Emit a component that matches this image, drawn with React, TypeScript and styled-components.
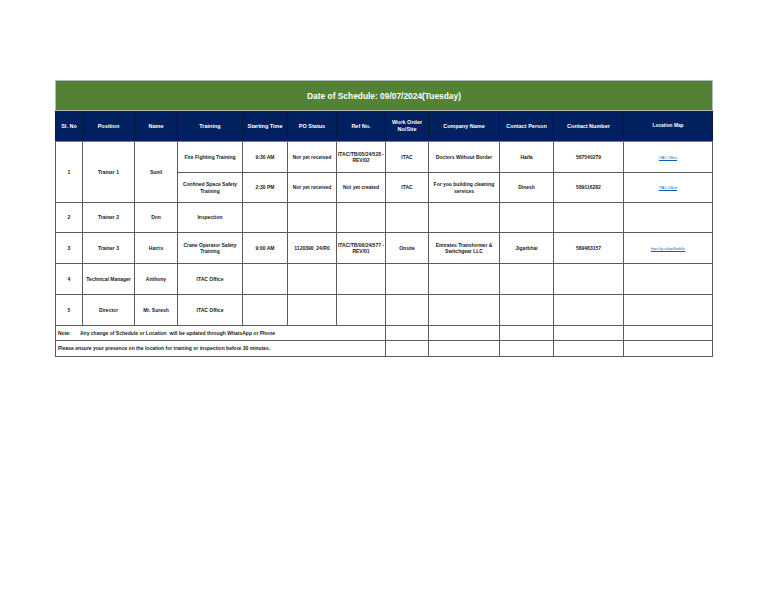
import React from 'react';
import styled, { createGlobalStyle } from 'styled-components';

const GlobalStyle = createGlobalStyle`
  html, body {
    margin: 0;
    padding: 0;
    background: #ffffff;
  }
  body {
    font-family: "Liberation Sans", Arial, sans-serif;
  }
`;

const Page = styled.div`
  width: 768px;
  height: 594px;
  padding: 80px 0 0 55px;
  box-sizing: border-box;
`;

const Sheet = styled.table`
  width: 657px;
  table-layout: fixed;
  border-collapse: collapse;
  font-family: "Liberation Sans", Arial, sans-serif;
  color: #1a1a1a;
`;

const TitleRow = styled.tr`
  height: 30px;
`;

const TitleCell = styled.th`
  background: #548235;
  color: #ffffff;
  font-size: 8.4px;
  font-weight: 700;
  text-align: center;
  vertical-align: middle;
  border: 1px solid #b8b8b8;
  padding: 0;
  padding-top: 1px;
`;

const HeadRow = styled.tr`
  height: 31px;
`;

const HeadCell = styled.th<{ $small?: boolean }>`
  background: #002060;
  color: #ffffff;
  font-size: ${({ $small }) => ($small ? '4.8px' : '5.5px')};
  font-weight: 700;
  line-height: 1.25;
  text-align: center;
  vertical-align: middle;
  border: 1px solid #10183a;
  border-bottom-color: #7a7a7a;
  padding: 0 2px;
`;

const Row = styled.tr<{ $h: number }>`
  height: ${({ $h }) => $h}px;
`;

const Cell = styled.td<{ $left?: boolean; $tight?: boolean }>`
  font-size: 5px;
  font-weight: 700;
  line-height: 1.3;
  text-align: ${({ $left }) => ($left ? 'left' : 'center')};
  vertical-align: middle;
  border: 1px solid #5c5c5c;
  padding: 0 ${({ $left, $tight }) => ($left ? '2px' : $tight ? '0' : '1px')};
  white-space: ${({ $tight }) => ($tight ? 'nowrap' : 'normal')};
  overflow: visible;
`;

const MapLink = styled.a<{ $tiny?: boolean }>`
  color: #0563c1;
  font-size: ${({ $tiny }) => ($tiny ? '3.3px' : '3.6px')};
  font-weight: 400;
  text-decoration: underline;
`;

const NoteLabel = styled.span`
  display: inline-block;
  width: 22px;
`;

const widths = [27, 52, 43, 65, 45, 49, 49, 43, 71, 54, 70, 89];

const headers = [
  'Sl. No',
  'Position',
  'Name',
  'Training',
  'Starting Time',
  'PO Status',
  'Ref No.',
  'Work Order No/Site',
  'Company Name',
  'Contact Person',
  'Contact Number',
];

const Empty = ({ count }: { count: number }) => (
  <>
    {Array.from({ length: count }).map((_, i) => (
      <Cell key={i} />
    ))}
  </>
);

export default function App() {
  return (
    <>
      <GlobalStyle />
      <Page>
        <Sheet>
          <colgroup>
            {widths.map((w, i) => (
              <col key={i} style={{ width: w }} />
            ))}
          </colgroup>
          <thead>
            <TitleRow>
              <TitleCell colSpan={12}>Date of Schedule: 09/07/2024(Tuesday)</TitleCell>
            </TitleRow>
            <HeadRow>
              {headers.map((h) => (
                <HeadCell key={h}>{h === 'Work Order No/Site' ? <>Work Order<br />No/Site</> : h}</HeadCell>
              ))}
              <HeadCell $small>Location Map</HeadCell>
            </HeadRow>
          </thead>
          <tbody>
            <Row $h={31}>
              <Cell rowSpan={2}>1</Cell>
              <Cell rowSpan={2}>Trainer 1</Cell>
              <Cell rowSpan={2}>Sunil</Cell>
              <Cell>Fire Fighting Training</Cell>
              <Cell>9:30 AM</Cell>
              <Cell>Not yet received</Cell>
              <Cell $tight>ITAC/TB/05/24/528 -<br />REV/02</Cell>
              <Cell>ITAC</Cell>
              <Cell>Doctors Without Border</Cell>
              <Cell>Haifa</Cell>
              <Cell>567540279</Cell>
              <Cell><MapLink href="#">ITAC Office</MapLink></Cell>
            </Row>
            <Row $h={30}>
              <Cell>Confined Space Safety<br />Training</Cell>
              <Cell>2:30 PM</Cell>
              <Cell>Not yet received</Cell>
              <Cell>Not yet created</Cell>
              <Cell>ITAC</Cell>
              <Cell>For you building cleaning<br />services</Cell>
              <Cell>Dinesh</Cell>
              <Cell>589116282</Cell>
              <Cell><MapLink href="#">ITAC Office</MapLink></Cell>
            </Row>
            <Row $h={30}>
              <Cell>2</Cell>
              <Cell>Trainer 2</Cell>
              <Cell>Don</Cell>
              <Cell>Inspection</Cell>
              <Empty count={8} />
            </Row>
            <Row $h={31}>
              <Cell>3</Cell>
              <Cell>Trainer 3</Cell>
              <Cell>Harris</Cell>
              <Cell>Crane Operator Safety<br />Training</Cell>
              <Cell>9:00 AM</Cell>
              <Cell>1120390_24/R0</Cell>
              <Cell $tight>ITAC/TB/06/24/577 -<br />REV/01</Cell>
              <Cell>Onsite</Cell>
              <Cell>Emirates Transformer &amp;<br />Switchgear LLC</Cell>
              <Cell>Jigarbhai</Cell>
              <Cell>589483157</Cell>
              <Cell><MapLink href="#" $tiny>https://g.co/kgs/9rwh6tc</MapLink></Cell>
            </Row>
            <Row $h={31}>
              <Cell>4</Cell>
              <Cell>Technical Manager</Cell>
              <Cell>Anthony</Cell>
              <Cell>ITAC Office</Cell>
              <Empty count={8} />
            </Row>
            <Row $h={31}>
              <Cell>5</Cell>
              <Cell>Director</Cell>
              <Cell>Mr. Suresh</Cell>
              <Cell>ITAC Office</Cell>
              <Empty count={8} />
            </Row>
            <Row $h={15}>
              <Cell colSpan={7} $left>
                <NoteLabel>Note:</NoteLabel>Any change of Schedule or Location&nbsp; will be updated through WhatsApp or Phone
              </Cell>
              <Empty count={5} />
            </Row>
            <Row $h={16}>
              <Cell colSpan={7} $left>
                Please ensure your presence on the location for training or inspection before 30 minutes.
              </Cell>
              <Empty count={5} />
            </Row>
          </tbody>
        </Sheet>
      </Page>
    </>
  );
}
